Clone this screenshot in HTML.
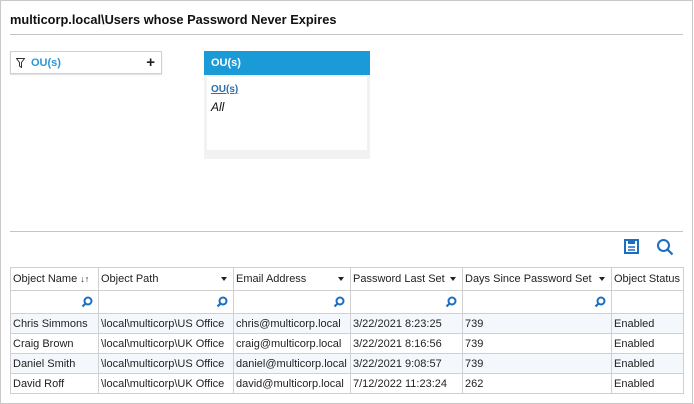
<!DOCTYPE html>
<html><head><style>
*{margin:0;padding:0;box-sizing:border-box}
body{width:694px;height:404px;background:#fff;font-family:"Liberation Sans",sans-serif;position:relative;overflow:hidden}
.frame{position:absolute;left:0;top:0;width:693px;height:404px;border:1px solid #c8c8c8}
.title{position:absolute;left:10px;top:12px;font-weight:bold;font-size:12.8px;color:#111}
.hl{position:absolute;left:10px;width:673px;height:1px;background:#c4c4c4}
.filt{position:absolute;left:10px;top:51px;width:152px;height:23px;border:1px solid #d0d0d0;box-shadow:0 1px 1px #ddd}
.filt .t{position:absolute;left:20px;top:5px;font-size:11px;font-weight:bold;color:#2b95d6}
.filt .p{position:absolute;right:6px;top:2px;font-size:15px;font-weight:bold;color:#222}
.card{position:absolute;left:204px;top:51px;width:166px;height:108px;background:#f2f2f2}
.card .h{height:24px;background:#1a9ad6;color:#fff;font-weight:bold;font-size:11px;padding:6px 7px}
.card .b{position:absolute;left:3px;top:26px;width:160px;height:73px;background:#fff}
.card .u{position:absolute;left:4px;top:7px;font-size:10px;font-weight:bold;color:#2b6fb0;text-decoration:underline}
.card .a{position:absolute;left:4px;top:23px;font-size:12px;font-style:italic;color:#111}
table{position:absolute;left:10px;top:267px;width:673px;table-layout:fixed;border-collapse:collapse;font-size:11px;color:#222}
td{border:1px solid #d0d0d0;height:20px;padding:0 2px;white-space:nowrap;overflow:hidden;position:relative}
tr.hd td{height:23px;background:#fff}
tr.fr td{height:23px}
tr.alt td{background:#f4f8fc}
.ar{position:absolute;right:6px;top:9px;border-left:3.5px solid transparent;border-right:3.5px solid transparent;border-top:4px solid #222}
.mg{position:absolute;right:5px;top:5px}
</style></head><body>
<div class="frame"></div>
<div class="title">multicorp.local\Users whose Password Never Expires</div>
<div class="hl" style="top:34px"></div>
<div class="filt"><svg style="position:absolute;left:5px;top:6px" width="9" height="10" viewBox="0 0 9 10"><path d="M0.5 0.5h8l-3 4v5l-2-1.5v-3.5z" fill="none" stroke="#333"/></svg><span class="t">OU(s)</span><span class="p">+</span></div>
<div class="card"><div class="h">OU(s)</div><div class="b"><div class="u">OU(s)</div><div class="a">All</div></div></div>
<div class="hl" style="top:231px"></div>
<svg style="position:absolute;left:624px;top:239px" width="15" height="15" viewBox="0 0 15 15"><rect x="1" y="1" width="13" height="13" fill="none" stroke="#1a6fc2" stroke-width="2"/><rect x="4" y="1" width="7" height="4" fill="#1a6fc2"/><path d="M4 8h7M4 11h7" stroke="#1a6fc2" stroke-width="1.5"/></svg>
<svg style="position:absolute;left:656px;top:238px" width="18" height="18" viewBox="0 0 18 18"><circle cx="7.5" cy="7.5" r="5.5" fill="none" stroke="#1a6fc2" stroke-width="2"/><path d="M11.5 11.5l5 5" stroke="#1a6fc2" stroke-width="2.2"/></svg>
<table>
<colgroup><col style="width:88px"><col style="width:135px"><col style="width:117px"><col style="width:112px"><col style="width:149px"><col style="width:72px"></colgroup>
<tr class="hd"><td>Object Name <span style="font-size:9px">↓↑</span></td><td>Object Path<span class="ar"></span></td><td>Email Address<span class="ar"></span></td><td>Password Last Set<span class="ar"></span></td><td>Days Since Password Set<span class="ar"></span></td><td>Object Status</td></tr>
<tr class="fr"><td><svg class="mg" width="12" height="12"><circle cx="7" cy="5" r="3.5" fill="none" stroke="#1a6fc2" stroke-width="2"/><path d="M4.5 7.5l-3 3" stroke="#1a6fc2" stroke-width="2.2"/></svg></td><td><svg class="mg" width="12" height="12"><circle cx="7" cy="5" r="3.5" fill="none" stroke="#1a6fc2" stroke-width="2"/><path d="M4.5 7.5l-3 3" stroke="#1a6fc2" stroke-width="2.2"/></svg></td><td><svg class="mg" width="12" height="12"><circle cx="7" cy="5" r="3.5" fill="none" stroke="#1a6fc2" stroke-width="2"/><path d="M4.5 7.5l-3 3" stroke="#1a6fc2" stroke-width="2.2"/></svg></td><td><svg class="mg" width="12" height="12"><circle cx="7" cy="5" r="3.5" fill="none" stroke="#1a6fc2" stroke-width="2"/><path d="M4.5 7.5l-3 3" stroke="#1a6fc2" stroke-width="2.2"/></svg></td><td><svg class="mg" width="12" height="12"><circle cx="7" cy="5" r="3.5" fill="none" stroke="#1a6fc2" stroke-width="2"/><path d="M4.5 7.5l-3 3" stroke="#1a6fc2" stroke-width="2.2"/></svg></td><td></td></tr>
<tr class="alt"><td>Chris Simmons</td><td>\local\multicorp\US Office</td><td>chris@multicorp.local</td><td>3/22/2021 8:23:25</td><td>739</td><td>Enabled</td></tr>
<tr><td>Craig Brown</td><td>\local\multicorp\UK Office</td><td>craig@multicorp.local</td><td>3/22/2021 8:16:56</td><td>739</td><td>Enabled</td></tr>
<tr class="alt"><td>Daniel Smith</td><td>\local\multicorp\US Office</td><td>daniel@multicorp.local</td><td>3/22/2021 9:08:57</td><td>739</td><td>Enabled</td></tr>
<tr><td>David Roff</td><td>\local\multicorp\UK Office</td><td>david@multicorp.local</td><td>7/12/2022 11:23:24</td><td>262</td><td>Enabled</td></tr>
</table>
</body></html>
